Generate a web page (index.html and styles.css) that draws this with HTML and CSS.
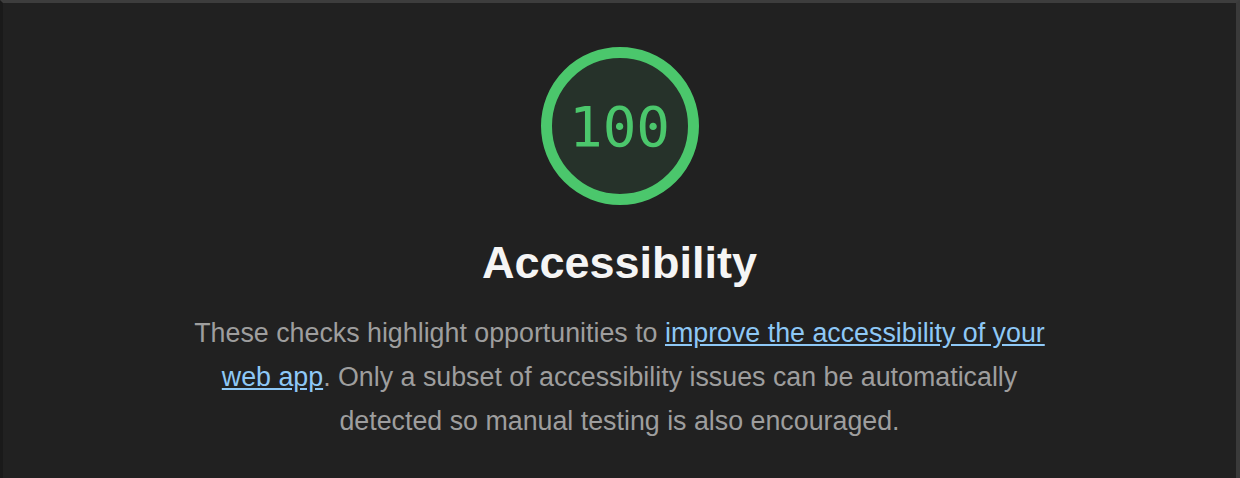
FILE: index.html
```html
<!DOCTYPE html>
<html lang="en">
<head>
<meta charset="utf-8">
<title>Accessibility</title>
<link rel="stylesheet" href="styles.css">
</head>
<body>
<div class="frame">
  <section class="category">
    <div class="gauge">
      <svg class="gauge-svg" viewBox="0 0 158 158" width="158" height="158" aria-hidden="true">
        <circle cx="79" cy="79" r="73.5" fill="#26322a" stroke="#4bc76c" stroke-width="11"/>
      </svg>
      <span class="gauge-value">100</span>
    </div>
    <h1 class="title">Accessibility</h1>
    <p class="desc">These checks highlight opportunities to <a href="#" class="link">improve the accessibility of your web app</a>. Only a subset of accessibility issues can be automatically detected so manual testing is also encouraged.</p>
  </section>
</div>
</body>
</html>
```
FILE: styles.css
```css
html, body {
  margin: 0;
  padding: 0;
  background: #212121;
}
body {
  width: 1240px;
  height: 478px;
  overflow: hidden;
  font-family: "Liberation Sans", Arial, sans-serif;
}
.frame {
  box-sizing: border-box;
  height: 478px;
  border-left: 3px solid #1a1a1a;
  border-top: 3px solid #3d3d3d;
  border-right: 4px solid #3a3a3a;
  background: #212121;
}
.category {
  display: flex;
  flex-direction: column;
  align-items: center;
  padding-top: 44px;
}
.gauge {
  position: relative;
  width: 158px;
  height: 158px;
}
.gauge-svg {
  display: block;
}
.gauge-value {
  position: absolute;
  inset: 0;
  display: flex;
  align-items: center;
  justify-content: center;
  font-family: "DejaVu Sans Mono", "Liberation Mono", monospace;
  font-size: 56px;
  color: #4bc76c;
}
.title {
  margin: 32px 0 0;
  font-size: 45px;
  font-weight: 700;
  line-height: 52px;
  color: #f5f5f5;
}
.desc {
  margin: 22px 0 0;
  max-width: 880px;
  text-align: center;
  font-size: 26.8px;
  line-height: 44px;
  color: #9e9e9e;
}
.link {
  color: #8ec8f6;
  text-decoration: underline;
}
```
